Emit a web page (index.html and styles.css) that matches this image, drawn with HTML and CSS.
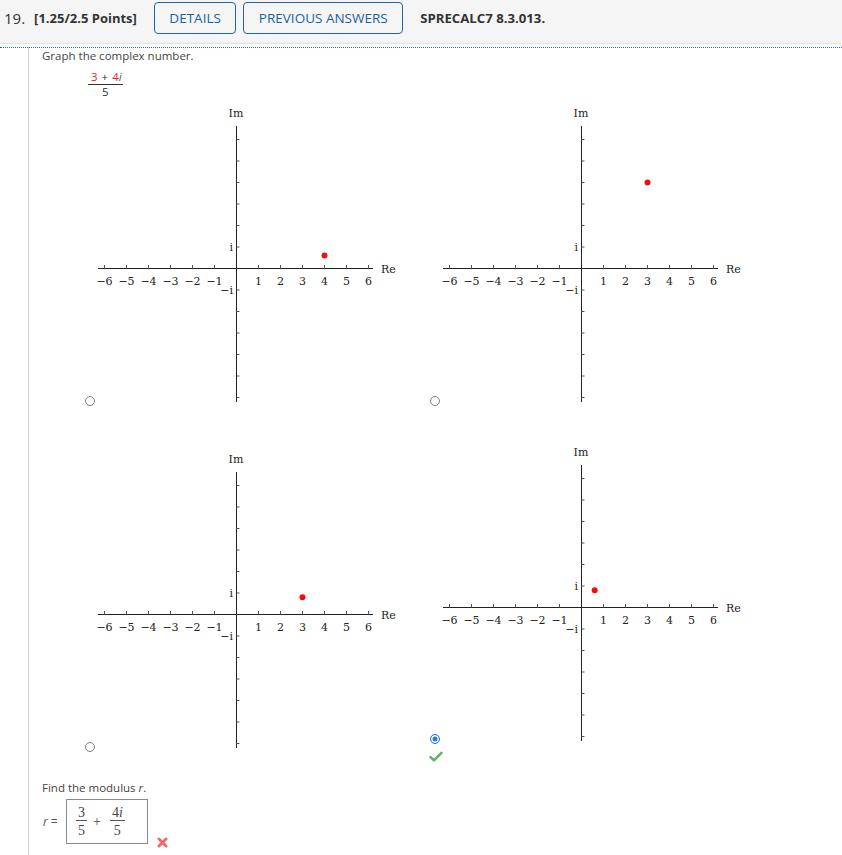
FILE: index.html
```html
<!DOCTYPE html>
<html lang="en">
<head>
<meta charset="utf-8">
<title>Question 19</title>
<link rel="stylesheet" href="styles.css">
</head>
<body>
<header class="qhead">
  <span class="qnum">19.</span>
  <span class="qpts">[1.25/2.5 Points]</span>
  <button class="btn btn-details" type="button">DETAILS</button>
  <button class="btn btn-prev" type="button">PREVIOUS ANSWERS</button>
  <span class="qcode">SPRECALC7 8.3.013.</span>
</header>
<main class="qbody">
  <div class="rule"></div>
  <p class="prompt">Graph the complex number.</p>
  <div class="qfrac">
    <span class="qnumr"><span class="red">3</span><span class="op">+</span><span class="red">4</span><i class="imag">i</i></span>
    <span class="qden">5</span>
  </div>

  <div class="choices">
    <div class="choice">
      <div class="cell">
        <span class="radio"></span>
        <svg class="graph" viewBox="0 0 300 300" width="300" height="300">
          <defs>
            <g id="axes">
              <path class="ax" d="M2 166.5H277M140.5 24V300"/>
              <path class="tk" d="M8.5 163v3.5M30.5 163v3.5M52.5 163v3.5M74.5 163v3.5M96.5 163v3.5M118.5 163v3.5M162.5 163v3.5M184.5 163v3.5M206.5 163v3.5M228.5 163v3.5M250.5 163v3.5M272.5 163v3.5"/>
              <path class="tk" d="M140.5 37.5h3M140.5 59h3M140.5 80.5h3M140.5 102h3M140.5 123.5h3M140.5 145h3M140.5 188h3M140.5 209.5h3M140.5 231h3M140.5 252.5h3M140.5 274h3M140.5 295.5h3"/>
              <g class="lbl">
                <text x="8.5" y="183">−6</text>
                <text x="30.5" y="183">−5</text>
                <text x="52.5" y="183">−4</text>
                <text x="74.5" y="183">−3</text>
                <text x="96.5" y="183">−2</text>
                <text x="118.5" y="183">−1</text>
                <text x="162.5" y="183">1</text>
                <text x="184.5" y="183">2</text>
                <text x="206.5" y="183">3</text>
                <text x="228.5" y="183">4</text>
                <text x="250.5" y="183">5</text>
                <text x="272.5" y="183">6</text>
                <text x="140" y="14.5">Im</text>
              </g>
              <g class="lbl-end">
                <text x="137" y="148.5">i</text>
                <text x="137" y="192">−i</text>
              </g>
              <text class="lbl-start" x="285" y="170.5">Re</text>
            </g>
          </defs>
          <use href="#axes"/>
          <circle class="pt" cx="228.5" cy="153.6" r="3"/>
        </svg>
      </div>
    </div>

    <div class="choice">
      <div class="cell">
        <span class="radio"></span>
        <svg class="graph" viewBox="0 0 300 300" width="300" height="300">
          <use href="#axes"/>
          <circle class="pt" cx="206.5" cy="80.5" r="3"/>
        </svg>
      </div>
    </div>

    <div class="choice choice-low">
      <div class="cell">
        <span class="radio"></span>
        <svg class="graph" viewBox="0 0 300 300" width="300" height="300">
          <use href="#axes"/>
          <circle class="pt" cx="206.5" cy="149.3" r="3"/>
        </svg>
      </div>
    </div>

    <div class="choice">
      <div class="cell">
        <span class="radio radio-on"></span>
        <svg class="graph" viewBox="0 0 300 300" width="300" height="300">
          <use href="#axes"/>
          <circle class="pt" cx="153.7" cy="149.3" r="3"/>
        </svg>
      </div>
      <svg class="check" viewBox="0 0 14 11" width="14" height="11">
        <path d="M1.6 6.1L5 9.3L12.4 1.8"/>
      </svg>
    </div>
  </div>

  <p class="prompt prompt-mod">Find the modulus <i>r</i>.</p>
  <div class="answer">
    <span class="rlabel"><i>r</i> =</span>
    <div class="abox">
      <span class="mfrac"><span class="mnum">3</span><span class="mden">5</span></span>
      <span class="mplus">+</span>
      <span class="mfrac"><span class="mnum">4<i>i</i></span><span class="mden">5</span></span>
    </div>
    <svg class="xmark" viewBox="0 0 11 11" width="11" height="11">
      <path d="M2 2L9 9M9 2L2 9"/>
    </svg>
  </div>
</main>
</body>
</html>
```
FILE: styles.css
```css
body {
  margin: 0;
  font-family: "Open Sans", "Liberation Sans", sans-serif;
  color: #333;
  background: #fff;
}

.qhead {
  display: flex;
  align-items: flex-start;
  height: 44px;
  box-sizing: border-box;
  padding: 2px 0 0 4px;
  background: #f5f5f5;
  border-bottom: 1px solid #e2e2e2;
}

.qnum {
  font-size: 15px;
  line-height: 32px;
  color: #333;
}

.qpts {
  font-size: 13px;
  font-weight: 700;
  line-height: 32px;
  margin-left: 9px;
  color: #333;
}

.btn {
  height: 32px;
  box-sizing: border-box;
  padding: 0 14.5px;
  border: 1px solid #2465a0;
  border-radius: 4px;
  background: transparent;
  color: #1d5f97;
  font-family: "Open Sans", "Liberation Sans", sans-serif;
  font-size: 13.5px;
  line-height: 30px;
}

.btn-details {
  margin-left: 17px;
}

.btn-prev {
  margin-left: 7px;
}

.qcode {
  font-size: 13.2px;
  font-weight: 700;
  line-height: 32px;
  margin-left: 17px;
  color: #333;
}

.qbody {
  margin-left: 28px;
  border-left: 1px solid #cfcfcf;
  padding-left: 13px;
  min-height: 811px;
  box-sizing: border-box;
}

.rule {
  margin: 3px 0 0 -42px;
  border-top: 1px dotted #0c72c8;
}

.prompt {
  margin: 0;
  font-size: 11.5px;
  line-height: 16px;
  color: #444;
}

.qfrac {
  display: flex;
  flex-direction: column;
  align-items: center;
  width: max-content;
  margin: 5px 0 0 46px;
  font-size: 11.5px;
  color: #333;
}

.qnumr {
  line-height: 15px;
  border-bottom: 1px solid #333;
  padding: 0 1px 0 3px;
}

.qden {
  line-height: 14px;
}

.red {
  color: #e61e1e;
}

.op {
  margin: 0 4px;
}

.imag {
  color: #4a5a7a;
}

.choices {
  display: grid;
  grid-template-columns: 345px 320px;
  row-gap: 39px;
  align-items: start;
  margin: 3px 0 0 43px;
}

.choice-low {
  margin-top: 7px;
}

.cell {
  display: flex;
  align-items: flex-end;
}

.radio {
  flex: none;
  width: 10px;
  height: 10px;
  box-sizing: border-box;
  margin: 0 1px -4px 0;
  border: 1px solid #808080;
  border-radius: 50%;
  background: #fff;
}

.radio-on {
  margin-bottom: -3px;
  border: 1.5px solid #2a7be4;
  background: #2a7be4;
  box-shadow: inset 0 0 0 1.5px #fff;
}

.graph {
  display: block;
  flex: none;
}

.ax {
  fill: none;
  stroke: #222;
  stroke-width: 1;
}

.tk {
  fill: none;
  stroke: #555;
  stroke-width: 1;
}

.lbl text,
.lbl-end text,
.lbl-start {
  font-family: "DejaVu Serif", serif;
  font-size: 11px;
  fill: #222;
}

.lbl text {
  text-anchor: middle;
}

.lbl-end text {
  text-anchor: end;
}

.lbl-start {
  text-anchor: start;
}

.pt {
  fill: #f50c0c;
}

.check {
  display: block;
  margin: 10px 0 0 -1px;
}

.check path {
  fill: none;
  stroke: #62b35a;
  stroke-width: 2.6;
  stroke-linecap: round;
  stroke-linejoin: round;
}

.prompt-mod {
  margin-top: 18px;
}

.answer {
  display: flex;
  align-items: center;
  margin: 3px 0 0 1px;
}

.rlabel {
  flex: none;
  width: 23px;
  font-size: 12px;
  color: #555;
}

.abox {
  display: flex;
  align-items: center;
  width: 82px;
  height: 45px;
  box-sizing: border-box;
  padding-left: 9px;
  border: 1px solid #8a8a8a;
  font-family: "Liberation Serif", serif;
  font-size: 14px;
  color: #444;
}

.mfrac {
  display: flex;
  flex-direction: column;
  align-items: center;
}

.mnum {
  border-bottom: 1px solid #555;
  padding: 0 2px;
  line-height: 14px;
}

.mden {
  padding-top: 3px;
  line-height: 14px;
}

.mplus {
  margin: 0 9px 0 6px;
}

.xmark {
  align-self: flex-end;
  margin: 0 0 -4px 9px;
}

.xmark path {
  fill: none;
  stroke: #f26b6b;
  stroke-width: 3;
  stroke-linecap: round;
}
```
